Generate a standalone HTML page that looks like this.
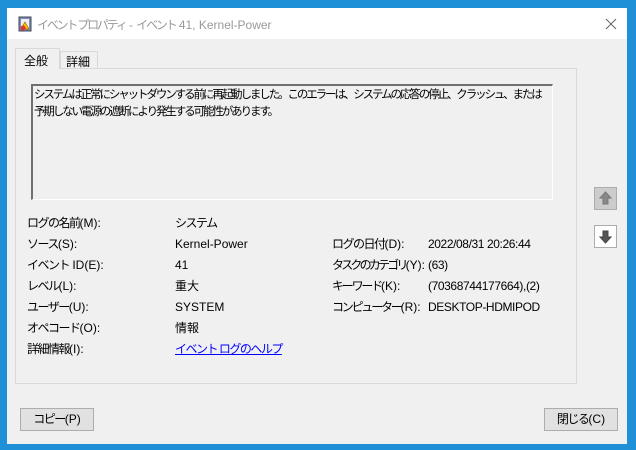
<!DOCTYPE html><html><head><meta charset="utf-8"><style>
*{margin:0;padding:0;box-sizing:border-box}
body{width:636px;height:450px;background:#1e90d8;position:relative;overflow:hidden;font-family:"Liberation Sans","Noto Sans CJK JP",sans-serif;font-size:12px;color:#000}
.a{position:absolute;white-space:nowrap}
#win{position:absolute;left:7px;top:8px;width:620px;height:436px;background:#f0f0f0}
#title{position:absolute;left:0;top:0;width:620px;height:31px;background:#fff}
.btn{position:absolute;border:1px solid #adadad;background:#e1e1e1;text-align:center;line-height:21px}
.ab{position:absolute;width:23px;height:23px;border:1px solid #adadad;background:#e1e1e1}
.l{letter-spacing:0}
.k{letter-spacing:-1.5px}
.k2{letter-spacing:-2.2px}
</style></head><body>
<div id="win">
<div id="title">
<svg class="a" style="left:10px;top:8px" width="16" height="16"><rect x="2" y="1" width="12" height="14" fill="#7b8fb8" stroke="#445" stroke-width="1"/><rect x="4" y="3" width="8" height="10" fill="#eee"/><polygon points="8,6 12,13 4,13" fill="#f4c400" stroke="#a60" stroke-width=".7"/><circle cx="6" cy="12" r="2.5" fill="#d33"/></svg>
<div class="a" style="left:30px;top:8px;color:#999;font-size:12px"><span class="k2">イベント プロパティ</span> - <span class="k2">イベント</span> 41, Kernel-Power</div>
<svg class="a" style="left:598px;top:10px" width="12" height="12"><path d="M1 1L11 11M11 1L1 11" stroke="#666" stroke-width="1"/></svg>
</div>
<div class="a" style="left:8px;top:60px;width:562px;height:316px;border:1px solid #d9d9d9;background:#f0f0f0"></div>
<div class="a" style="left:8px;top:40px;width:45px;height:21px;border:1px solid #d9d9d9;border-bottom:none;background:#f0f0f0;padding:3px 0 0 8px">全般</div>
<div class="a" style="left:53px;top:43px;width:38px;height:17px;border:1px solid #d9d9d9;border-bottom:none;background:#f0f0f0;padding:1px 0 0 5px">詳細</div>
<div class="a" style="left:24px;top:76px;width:522px;height:116px;border-top:2px solid #707070;border-left:2px solid #707070;border-right:1px solid #fff;border-bottom:1px solid #fff;padding:1px 0 0 1px;line-height:17px;font-size:11.5px;letter-spacing:-2.1px">システムは正常にシャットダウンする前に再起動しました。このエラーは、システムの応答の停止、クラッシュ、または<br>予期しない電源の遮断により発生する可能性があります。</div>
<div class="a" style="left:20px;top:205px;line-height:21px"><span class="k">ログの名前</span>(M):<br><span class="k">ソース</span>(S):<br><span class="k">イベント</span> ID(E):<br><span class="k">レベル</span>(L):<br><span class="k">ユーザー</span>(U):<br><span class="k">オペコード</span>(O):<br><span class="k">詳細情報</span>(I):</div>
<div class="a" style="left:168px;top:205px;line-height:21px"><span class="k">システム</span><br>Kernel-Power<br>41<br>重大<br>SYSTEM<br>情報<br><span style="color:#00f;text-decoration:underline;letter-spacing:-1.5px">イベント ログのヘルプ</span></div>
<div class="a" style="left:325px;top:226px;line-height:21px"><span class="k">ログの日付</span>(D):<br><span style="letter-spacing:-2.8px">タスクのカテゴリ</span>(Y):<br><span class="k2">キーワード</span>(K):<br><span class="k2">コンピューター</span>(R):</div>
<div class="a" style="left:421px;top:226px;line-height:21px;letter-spacing:-0.4px">2022/08/31 20:26:44<br>(63)<br>(70368744177664),(2)<br>DESKTOP-HDMIPOD</div>
<div class="ab" style="left:587px;top:179px;background:#ccc"><svg width="21" height="21"><polygon points="10.5,4 16,10 13,10 13,16 8,16 8,10 5,10" fill="#888" stroke="#777"/></svg></div>
<div class="ab" style="left:587px;top:217px;background:#fff"><svg width="21" height="21"><polygon points="10.5,17 16,11 13,11 13,5 8,5 8,11 5,11" fill="#555" stroke="#444"/></svg></div>
<div class="btn" style="left:13px;top:400px;width:74px;height:23px"><span class="k">コピー</span>(P)</div>
<div class="btn" style="left:537px;top:400px;width:74px;height:23px"><span class="k">閉じる</span>(C)</div>
</div>
</body></html>
